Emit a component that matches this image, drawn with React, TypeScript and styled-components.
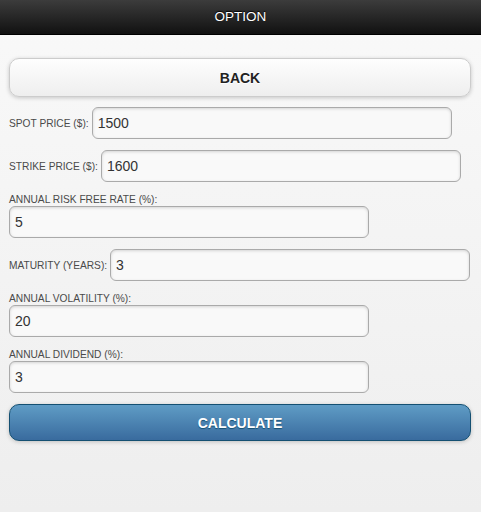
import React, { useState } from 'react';
import styled, { createGlobalStyle } from 'styled-components';

const GlobalStyle = createGlobalStyle`
  html, body {
    margin: 0;
    padding: 0;
  }
  body {
    font-family: "Liberation Sans", Arial, Helvetica, sans-serif;
    background: #eeeeee;
  }
`;

const Page = styled.div`
  min-height: 512px;
  background: linear-gradient(#f9f9f9, #eeeeee);
`;

const Header = styled.header`
  height: 35px;
  box-sizing: border-box;
  border-bottom: 1px solid #000;
  background: linear-gradient(#3c3c3c, #111111);
  display: flex;
  align-items: center;
  justify-content: center;
`;

const Title = styled.h1`
  margin: 0;
  color: #fff;
  font-size: 13.5px;
  font-weight: normal;
  text-shadow: 0 -1px 1px #000;
  padding-bottom: 2px;
`;

const Content = styled.main`
  padding: 23px 10px 0 9px;
  display: flex;
  flex-direction: column;
`;

const Button = styled.button<{ $primary?: boolean }>`
  width: 100%;
  box-sizing: border-box;
  height: ${(p) => (p.$primary ? '37px' : '39px')};
  border-radius: 10px;
  font-family: inherit;
  font-size: 14px;
  font-weight: bold;
  cursor: pointer;
  border: 1px solid ${(p) => (p.$primary ? '#145072' : '#cccccc')};
  color: ${(p) => (p.$primary ? '#fff' : '#222')};
  background: ${(p) =>
    p.$primary
      ? 'linear-gradient(#5f9cc5, #396b9e)'
      : 'linear-gradient(#fefefe, #eeeeee)'};
  text-shadow: ${(p) => (p.$primary ? '0 1px 1px #145072' : '0 1px 0 #fff')};
  box-shadow: 0 1px 4px rgba(0, 0, 0, 0.2);
`;

const Form = styled.div`
  display: flex;
  flex-direction: column;
  gap: 11px;
  margin: 10px 0 11px;
`;

const Field = styled.div<{ $stacked?: boolean }>`
  display: flex;
  flex-direction: ${(p) => (p.$stacked ? 'column' : 'row')};
  align-items: ${(p) => (p.$stacked ? 'flex-start' : 'center')};
  gap: ${(p) => (p.$stacked ? '0' : '3px')};
`;

const Label = styled.label`
  font-size: 10.2px;
  line-height: 13px;
  color: #4a4a4a;
  text-transform: uppercase;
  white-space: nowrap;
`;

const Input = styled.input`
  width: 360px;
  height: 32px;
  box-sizing: border-box;
  border: 1px solid #aaaaaa;
  border-radius: 6px;
  padding: 0 5px;
  font-family: inherit;
  font-size: 14px;
  color: #333;
  background: #f9f9f9;
  box-shadow: inset 0 1px 3px rgba(0, 0, 0, 0.15);
  outline: none;
`;

type FieldDef = { key: string; label: string; stacked?: boolean };

const fields: FieldDef[] = [
  { key: 'spot', label: 'Spot price ($):' },
  { key: 'strike', label: 'Strike price ($):' },
  { key: 'rate', label: 'Annual risk free rate (%):', stacked: true },
  { key: 'maturity', label: 'Maturity (years):' },
  { key: 'vol', label: 'Annual volatility (%):', stacked: true },
  { key: 'div', label: 'Annual dividend (%):', stacked: true },
];

export default function App() {
  const [values, setValues] = useState<Record<string, string>>({
    spot: '1500',
    strike: '1600',
    rate: '5',
    maturity: '3',
    vol: '20',
    div: '3',
  });

  return (
    <Page>
      <GlobalStyle />
      <Header>
        <Title>OPTION</Title>
      </Header>
      <Content>
        <Button>BACK</Button>
        <Form>
          {fields.map((f) => (
            <Field key={f.key} $stacked={f.stacked}>
              <Label htmlFor={f.key}>{f.label}</Label>
              <Input
                id={f.key}
                value={values[f.key]}
                onChange={(e) => setValues({ ...values, [f.key]: e.target.value })}
              />
            </Field>
          ))}
        </Form>
        <Button $primary>CALCULATE</Button>
      </Content>
    </Page>
  );
}
